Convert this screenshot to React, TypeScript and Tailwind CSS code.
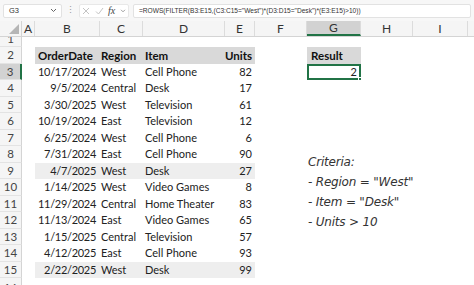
import React from "react";

type Row = { n: number; date: string; region: string; item: string; units: string; hl?: boolean };

const rows: Row[] = [
  { n: 3, date: "10/17/2024", region: "West", item: "Cell Phone", units: "82" },
  { n: 4, date: "9/5/2024", region: "Central", item: "Desk", units: "17" },
  { n: 5, date: "3/30/2025", region: "West", item: "Television", units: "61" },
  { n: 6, date: "10/19/2024", region: "East", item: "Television", units: "12" },
  { n: 7, date: "6/25/2024", region: "West", item: "Cell Phone", units: "6" },
  { n: 8, date: "7/31/2024", region: "East", item: "Cell Phone", units: "90" },
  { n: 9, date: "4/7/2025", region: "West", item: "Desk", units: "27", hl: true },
  { n: 10, date: "1/14/2025", region: "West", item: "Video Games", units: "8" },
  { n: 11, date: "11/29/2024", region: "Central", item: "Home Theater", units: "83" },
  { n: 12, date: "11/13/2024", region: "East", item: "Video Games", units: "65" },
  { n: 13, date: "1/15/2025", region: "Central", item: "Television", units: "57" },
  { n: 14, date: "4/12/2025", region: "East", item: "Cell Phone", units: "93" },
  { n: 15, date: "2/22/2025", region: "West", item: "Desk", units: "99", hl: true },
];

const cols = [
  { l: "A", w: "w-[13px]" },
  { l: "B", w: "w-[65px]" },
  { l: "C", w: "w-[43px]" },
  { l: "D", w: "w-[82px]" },
  { l: "E", w: "w-[30px]" },
  { l: "F", w: "w-[52px]" },
  { l: "G", w: "w-[54px]" },
  { l: "H", w: "w-[52px]" },
  { l: "I", w: "w-[55px]" },
];

function RowHead({ n, active }: { n: number; active?: boolean }) {
  return (
    <div
      className={
        "w-[22px] shrink-0 h-full flex items-center justify-center border-b border-[#e3e3e3] text-[11.5px] text-[#444] " +
        (active ? "bg-[#d2d2d2] border-r-2 border-r-[#217346]" : "bg-[#f5f5f5] border-r border-r-[#d4d4d4]")
      }
    >
      {n}
    </div>
  );
}

export default function App() {
  return (
    <div className="w-[474px] h-[285px] overflow-hidden bg-white text-[#222] font-['Lato','Liberation_Sans',sans-serif] relative">
      {/* formula bar */}
      <div className="h-[21px] flex items-center gap-1 px-[3px] bg-[#f7f7f7] text-[7.5px] font-['Liberation_Sans',sans-serif] text-[#333]">
        <div className="w-[59px] h-[14px] flex items-center justify-between pl-[5px] pr-[4px] bg-white border border-[#e2e2e2] rounded-[2px]">
          <span>G3</span>
          <svg width="7" height="5" viewBox="0 0 7 5" fill="none" stroke="#666" strokeWidth="1"><path d="M1 1l2.5 2.5L6 1" /></svg>
        </div>
        <span className="text-[#999] text-[9px] leading-none">⋮</span>
        <div className="w-[50px] h-[14px] flex items-center justify-around bg-white border border-[#e8e8e8] rounded-[2px]">
          <svg width="8" height="8" viewBox="0 0 8 8" stroke="#c4c4c4" strokeWidth="1"><path d="M1 1l6 6M7 1L1 7" /></svg>
          <svg width="9" height="8" viewBox="0 0 9 8" fill="none" stroke="#c4c4c4" strokeWidth="1"><path d="M1 4.5l2.5 2.5L8 1" /></svg>
          <span className="italic font-['Liberation_Serif',serif] text-[10px] text-[#444] leading-none">fx</span>
          <svg width="6" height="4" viewBox="0 0 7 5" fill="none" stroke="#888" strokeWidth="1"><path d="M1 1l2.5 2.5L6 1" /></svg>
        </div>
        <div className="flex-1 h-[14px] flex items-center pl-[5px] bg-white border border-[#e2e2e2] rounded-[2px] whitespace-nowrap overflow-hidden text-[6.6px]">
          =ROWS(FILTER(B3:E15,(C3:C15="West")*(D3:D15="Desk")*(E3:E15)&gt;10))
        </div>
      </div>

      {/* column headers */}
      <div className="h-[16px] flex bg-[#f5f5f5] border-b border-[#d4d4d4] text-[12px] text-[#333]">
        <div className="w-[22px] shrink-0 h-full relative border-r border-[#d4d4d4]">
          <svg className="absolute right-[2px] bottom-[2px]" width="10" height="10" viewBox="0 0 10 10"><path d="M10 0V10H0Z" fill="#b5b5b5" /></svg>
        </div>
        {cols.map((c) => (
          <div
            key={c.l}
            className={
              c.w +
              " shrink-0 h-full flex items-center justify-center border-r border-[#dcdcdc] " +
              (c.l === "G" ? "bg-[#d2d2d2] border-b-2 border-b-[#217346]" : "")
            }
          >
            {c.l}
          </div>
        ))}
        <div className="flex-1" />
      </div>

      {/* row 1 (scrolled, partly hidden) */}
      <div className="h-[10px] flex overflow-hidden">
        <div className="w-[22px] shrink-0 h-full bg-[#f5f5f5] border-r border-[#d4d4d4] border-b border-b-[#e3e3e3] overflow-hidden flex justify-center">
          <span className="text-[11.5px] text-[#444] leading-none -mt-[4px]">1</span>
        </div>
      </div>

      {/* row 2 */}
      <div className="h-[16.5px] flex items-center text-[11.5px]">
        <RowHead n={2} />
        <div className="w-[13px] shrink-0" />
        <div className="w-[220px] shrink-0 h-full flex items-center bg-[#d9d9d9] font-bold text-[#111]">
          <div className="w-[64px] pl-[3px]">OrderDate</div>
          <div className="w-[43px] pl-[2px]">Region</div>
          <div className="w-[82px] pl-[3px]">Item</div>
          <div className="w-[31px] text-right pr-[3px]">Units</div>
        </div>
        <div className="w-[52px] shrink-0" />
        <div className="w-[54px] shrink-0 h-full flex items-center bg-[#d9d9d9] font-bold text-[#111] pl-[4px]">Result</div>
      </div>

      {rows.map((r) => (
        <div key={r.n} className="h-[16.5px] flex items-center text-[11px] text-[#222]">
          <RowHead n={r.n} active={r.n === 3} />
          <div className="w-[13px] shrink-0" />
          <div className={"w-[220px] shrink-0 h-full flex items-center whitespace-nowrap " + (r.hl ? "bg-[#eeeeee]" : "")}>
            <div className="w-[64px] text-right pr-[3px] tracking-[-0.3px]">{r.date}</div>
            <div className="w-[43px] pl-[2px]">{r.region}</div>
            <div className="w-[82px] pl-[3px]">{r.item}</div>
            <div className="w-[31px] text-right pr-[3px]">{r.units}</div>
          </div>
          <div className="w-[52px] shrink-0" />
          {r.n === 3 && (
            <div className="w-[54px] shrink-0 h-full relative border-2 border-[#217346] flex items-center justify-end pr-[2px]">
              2
              <span className="absolute -right-[3px] -bottom-[3px] w-[4px] h-[4px] bg-[#217346] border border-white" />
            </div>
          )}
        </div>
      ))}

      {/* row 16 partial */}
      <div className="h-[10px] flex">
        <div className="w-[22px] shrink-0 h-full bg-[#f5f5f5] border-r border-[#d4d4d4] overflow-hidden flex justify-center">
          <span className="text-[11.5px] text-[#444] leading-none mt-[4px]">16</span>
        </div>
      </div>

      {/* criteria text box */}
      <div className="absolute left-[308px] top-[152px] text-[12px] leading-[20px] italic text-[#333] font-['DejaVu_Sans',sans-serif] tracking-[-0.2px]">
        <div>Criteria:</div>
        <div>- Region = "West"</div>
        <div>- Item = "Desk"</div>
        <div>- Units &gt; 10</div>
      </div>
    </div>
  );
}
